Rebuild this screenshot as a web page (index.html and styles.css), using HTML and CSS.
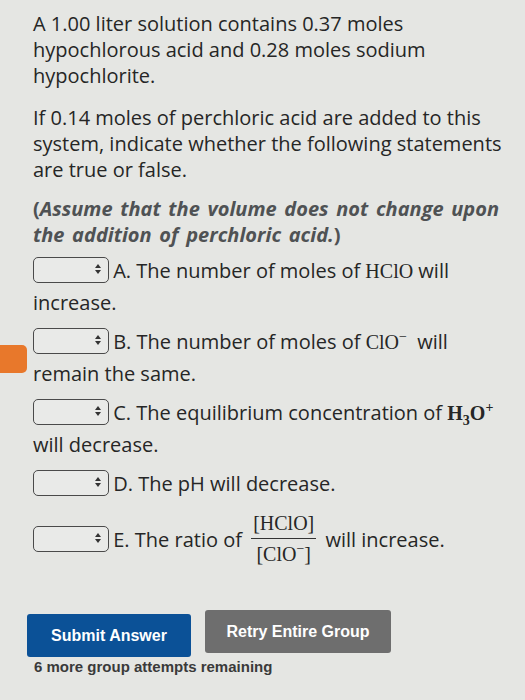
FILE: index.html
```html
<!DOCTYPE html>
<html>
<head>
<meta charset="utf-8">
<link rel="stylesheet" href="styles.css">
</head>
<body>
<div class="tab"></div>
<main class="page">
  <p class="para">A 1.00 liter solution contains 0.37 moles hypochlorous acid and 0.28 moles sodium hypochlorite.</p>
  <p class="para gap">If 0.14 moles of perchloric acid are added to this system, indicate whether the following statements are true or false.</p>
  <p class="para note">(<em>Assume that the volume does not change upon the addition of perchloric acid.</em>)</p>

  <p class="item a"><span class="sel"><span class="arr"></span></span> A. The number of moles of <span class="chem">HClO</span> will increase.</p>
  <p class="item"><span class="sel"><span class="arr"></span></span> B. The number of moles of <span class="chem">ClO<sup>−</sup></span>&nbsp; will remain the same.</p>
  <p class="item"><span class="sel"><span class="arr"></span></span> C. The equilibrium concentration of <span class="chem b">H<sub>3</sub>O<sup>+</sup></span> will decrease.</p>
  <p class="item"><span class="sel"><span class="arr"></span></span> D. The pH will decrease.</p>
  <p class="item e"><span class="sel"><span class="arr"></span></span> E. The ratio of <span class="frac"><span class="num chem">[HClO]</span><span class="den chem">[ClO<sup>−</sup>]</span></span> will increase.</p>

  <div class="actions">
    <button class="btn submit">Submit Answer</button>
    <button class="btn retry">Retry Entire Group</button>
  </div>
  <p class="remain">6 more group attempts remaining</p>
</main>
</body>
</html>
```

FILE: styles.css
```css
html, body {
  margin: 0;
  padding: 0;
  background: #e5e6e3;
  height: 100%;
}
body {
  position: relative;
  overflow: hidden;
  font-family: "Open Sans", "DejaVu Sans", sans-serif;
  color: #262626;
}
.page {
  padding: 11px 18px 0 33px;
  width: 474px;
}
.para {
  margin: 0;
  font-size: 20px;
  line-height: 26px;
}
.gap { margin-top: 16px; }
.note {
  margin-top: 13px;
  color: #4f5254;
  font-weight: 700;
  word-spacing: 2.5px;
}
.note em { font-style: italic; }
.item {
  margin: 8px 0 0;
  font-size: 20px;
  line-height: 31px;
}
.item.a { margin-top: 7px; }
.item.e { margin-top: 14px; }
.sel {
  display: inline-block;
  vertical-align: middle;
  position: relative;
  top: -3px;
  width: 74px;
  height: 24px;
  border: 1.5px solid #4a4a4a;
  border-radius: 5px;
  background: #e9eae8;
  margin-right: -1px;
}
.arr {
  position: absolute;
  right: 10px;
  top: 6px;
  width: 0;
  height: 0;
}
.arr::before, .arr::after {
  content: "";
  position: absolute;
  left: -3px;
  border-left: 3px solid transparent;
  border-right: 3px solid transparent;
}
.arr::before { top: 0; border-bottom: 4px solid #333; }
.arr::after { top: 6px; border-top: 4px solid #333; }
.chem {
  font-family: "Liberation Serif", "DejaVu Serif", serif;
  font-size: 20px;
}
.chem.b { font-weight: 700; }
.chem sup, .chem sub {
  font-size: 14px;
  line-height: 0;
}
.frac {
  display: inline-flex;
  flex-direction: column;
  align-items: center;
  vertical-align: middle;
  margin: 0 4px;
  line-height: 27px;
  position: relative;
  top: -3px;
}
.num {
  border-bottom: 1.5px solid #333;
  padding: 0 2px 1px;
}
.den { padding-top: 2px; }
.actions {
  display: flex;
  gap: 14px;
  align-items: center;
  margin: 43px 0 0 -6px;
}
.btn {
  border: none;
  border-radius: 3px;
  color: #fff;
  font-family: "Liberation Sans", Arial, sans-serif;
  font-weight: 700;
  font-size: 16px;
  height: 43px;
  padding: 0;
}
.submit {
  width: 164px;
  background: #0b5197;
}
.retry {
  width: 186px;
  background: #6e6e6e;
  position: relative;
  top: -4px;
}
.remain {
  margin: 1px 0 0 1px;
  font-family: "Liberation Sans", Arial, sans-serif;
  font-weight: 700;
  font-size: 15px;
  color: #3a3a3a;
}
.tab {
  position: absolute;
  left: -8px;
  top: 345px;
  width: 35px;
  height: 28px;
  border-radius: 5px;
  background: #e8782b;
}
```
